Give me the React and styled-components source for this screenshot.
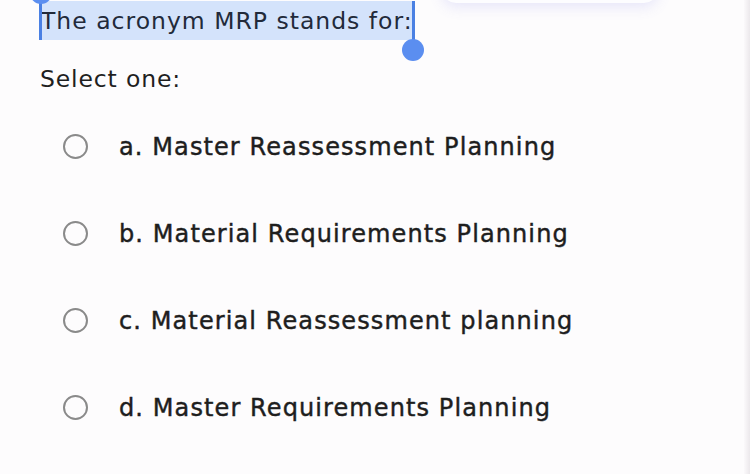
import React from 'react'
import styled, { createGlobalStyle } from 'styled-components'

const GlobalStyle = createGlobalStyle`
    html, body {
        margin: 0;
        padding: 0;
        background: #fdfcfd;
    }
    body {
        font-family: "DejaVu Sans", "Open Sans", sans-serif;
    }
`

const options = [
    'a. Master Reassessment Planning',
    'b. Material Requirements Planning',
    'c. Material Reassessment planning',
    'd. Master Requirements Planning',
]

const App = () => {
    return (
        <Page>
            <GlobalStyle />
            <FloatingCard />
            <Content>
                <QuestionRow>
                    <Selected>
                        The acronym MRP stands for:
                        <Handle side='start' />
                        <Handle side='end' />
                    </Selected>
                </QuestionRow>
                <Prompt>Select one:</Prompt>
                <OptionList>
                    {
                        options.map((label) => (
                            <Option key={label}>
                                <Radio />
                                <OptionLabel>{label}</OptionLabel>
                            </Option>
                        ))
                    }
                </OptionList>
            </Content>
            <EdgeStrip />
        </Page>
    )
}

const Page = styled.div`
    position: relative;
    display: flex;
    width: 750px;
    height: 474px;
    overflow: hidden;
`

const Content = styled.div`
    flex: 1;
    padding: 1px 0 0 40px;
`

const EdgeStrip = styled.div`
    width: 6px;
    background: linear-gradient(to right, #fbf9fb, #ebe8eb);
`

const FloatingCard = styled.div`
    position: absolute;
    top: -40px;
    left: 442px;
    width: 216px;
    height: 43px;
    border-radius: 14px;
    background: #fdfdff;
    box-shadow: 0 4px 14px rgba(110, 110, 230, 0.16);
`

const QuestionRow = styled.div`
    height: 39px;
`

const Selected = styled.span`
    position: relative;
    display: inline-block;
    height: 39px;
    line-height: 40px;
    padding: 0 1px 0 1px;
    font-size: 23.5px;
    letter-spacing: 1px;
    color: #222a3a;
    background: #d4e3fb;
`

const Handle = styled.span`
    position: absolute;
    top: 0;
    height: 39px;
    width: 3px;
    background: #4a80e3;
    ${({ side }) => side === 'start' ? 'left: -1px;' : 'right: -1px;'}

    &::after {
        content: '';
        position: absolute;
        left: 50%;
        width: 22px;
        height: 22px;
        margin-left: -11px;
        border-radius: 50%;
        background: #5b8ef0;
        ${({ side }) => side === 'start' ? 'top: -19px;' : 'top: 38px;'}
    }
`

const Prompt = styled.div`
    margin-top: 20px;
    font-size: 23.5px;
    letter-spacing: 0.85px;
    line-height: 38px;
    color: #1f1f1f;
`

const OptionList = styled.div`
    display: flex;
    flex-direction: column;
    margin-top: 5px;
    padding-left: 23px;
`

const Option = styled.div`
    display: flex;
    align-items: center;
    gap: 31px;
    height: 87px;
`

const Radio = styled.span`
    box-sizing: border-box;
    width: 25px;
    height: 25px;
    border-radius: 50%;
    border: 2.5px solid #8a8a8a;
    flex-shrink: 0;
`

const OptionLabel = styled.span`
    font-size: 24px;
    letter-spacing: 1.1px;
    color: #1e1e1e;
    -webkit-text-stroke: 0.45px #1e1e1e;
`

export default App
